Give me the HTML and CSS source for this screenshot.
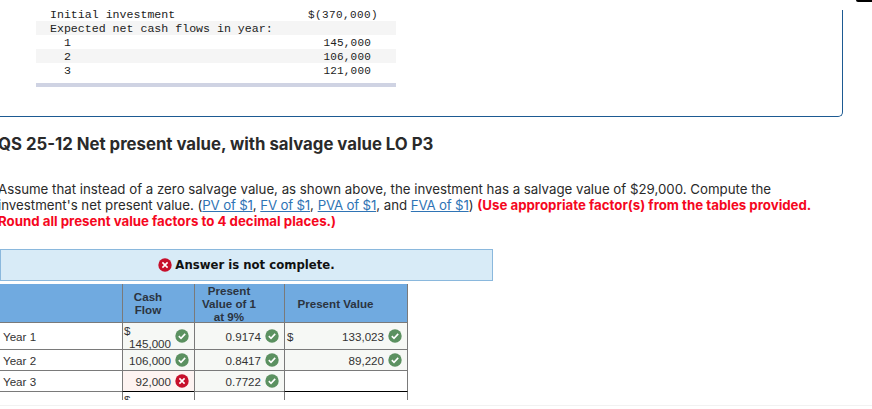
FILE: index.html
```html
<!DOCTYPE html>
<html lang="en">
<head>
<meta charset="utf-8">
<title>QS 25-12</title>
<link rel="stylesheet" href="styles.css">
</head>
<body>
<svg width="0" height="0" class="defs" aria-hidden="true">
  <symbol id="ok" viewBox="0 0 14 14"><circle cx="7" cy="7" r="6.7" fill="#5b9160"/><path d="M3.8 7.2 6 9.3 10.2 4.9" fill="none" stroke="#fff" stroke-width="1.6"/></symbol>
  <symbol id="bad" viewBox="0 0 14 14"><circle cx="7" cy="7" r="6.7" fill="#c70f2b"/><path d="M4.4 4.4 9.6 9.6M9.6 4.4 4.4 9.6" fill="none" stroke="#fff" stroke-width="1.6"/></symbol>
</svg>
<div class="corner"></div>
<section class="panel">
  <div class="data">
    <div class="drow"><span>Initial investment</span><span class="amt first">$(370,000)</span></div>
    <div class="drow band"><span>Expected net cash flows in year:</span></div>
    <div class="drow"><span class="yr">1</span><span class="amt">145,000</span></div>
    <div class="drow band"><span class="yr">2</span><span class="amt">106,000</span></div>
    <div class="drow"><span class="yr">3</span><span class="amt">121,000</span></div>
    <div class="dbar"></div>
  </div>
</section>
<h1 class="title">QS 25-12 Net present value, with salvage value LO P3</h1>
<p class="prompt">Assume that instead of a zero salvage value, as shown above, the investment has a salvage value of $29,000. Compute the<br>investment's net present value. (<a href="#">PV of $1</a>, <a href="#">FV of $1</a>, <a href="#">PVA of $1</a>, and <a href="#">FVA of $1</a>) <strong>(Use appropriate factor(s) from the tables provided.<br>Round all present value factors to 4 decimal places.)</strong></p>
<div class="notice"><svg class="ic"><use href="#bad"/></svg><span>Answer is not complete.</span></div>
<div class="sheet">
  <div class="h"></div>
  <div class="h">Cash<br>Flow</div>
  <div class="h">Present<br>Value of 1<br>at 9%</div>
  <div class="h">Present Value</div>

  <div class="c lbl r1">Year 1</div>
  <div class="c num tint r1"><span class="cur">$</span><span class="low">145,000</span><svg class="ic"><use href="#ok"/></svg></div>
  <div class="c num tint r1">0.9174<svg class="ic"><use href="#ok"/></svg></div>
  <div class="c num tint r1"><span class="cur2">$</span>133,023<svg class="ic"><use href="#ok"/></svg></div>

  <div class="c lbl">Year 2</div>
  <div class="c num tint">106,000<svg class="ic"><use href="#ok"/></svg></div>
  <div class="c num tint">0.8417<svg class="ic"><use href="#ok"/></svg></div>
  <div class="c num tint">89,220<svg class="ic"><use href="#ok"/></svg></div>

  <div class="c lbl">Year 3</div>
  <div class="c num err">92,000<svg class="ic"><use href="#bad"/></svg></div>
  <div class="c num tint">0.7722<svg class="ic"><use href="#ok"/></svg></div>
  <div class="c"></div>

  <div class="c last"></div>
  <div class="c last total"><span class="cur">$</span></div>
  <div class="c last"></div>
  <div class="c last total"></div>
</div>
<div class="foot"></div>
</body>
</html>
```
FILE: styles.css
```css
html, body { margin: 0; padding: 0; }
body { width: 872px; height: 409px; overflow: hidden; background: #fff; position: relative; font-family: "Liberation Sans", Arial, sans-serif; color: #222; }
.defs { position: absolute; }
.corner { position: absolute; top: 0; right: 0; width: 16px; height: 2px; background: #000; border-bottom-left-radius: 2px; }
.panel { width: 843px; height: 117px; box-sizing: border-box; padding-top: 8px; position: relative; }
.panel::after { content: ""; position: absolute; left: 0; right: 0; top: 10px; bottom: 0; box-sizing: border-box; border-right: 1px solid #1d5a92; border-bottom: 1px solid #1d5a92; border-bottom-right-radius: 5px; }
.data { margin-left: 36px; width: 360px; margin-top: -1px; font: 11.6px/14px "Liberation Mono", "Courier New", monospace; color: #222; }
.drow { height: 14px; display: flex; padding-left: 14px; }
.drow span { position: relative; top: 1px; }
.band { background: #f5f5f5; }
.yr { padding-left: 14px; }
.amt { margin-left: auto; padding-right: 25px; font-size: 11px; letter-spacing: .2px; }
.amt.first { padding-right: 18px; letter-spacing: .4px; }
.dbar { height: 4px; margin-top: 6px; background: #cfd3e3; }
.title { margin: 17px 0 0 -2px; font: 700 16.75px/20px Inter, sans-serif; color: #2a2a2a; white-space: nowrap; }
.prompt { margin: 27px 0 0 -2px; font: 13.28px/16px Inter, sans-serif; color: #2a2a2a; white-space: nowrap; }
.prompt a { color: #2f74b5; text-decoration: underline; letter-spacing: -.18px; }
.prompt strong { color: #f5071e; font-weight: 700; }
.notice { margin-top: 20px; width: 493px; height: 32px; box-sizing: border-box; background: #d8ebf7; border: 1px solid #8ab8dd; display: flex; align-items: center; justify-content: center; gap: 3px; font: 700 11.7px "DejaVu Sans", sans-serif; color: #111; }
.ic { width: 14px; height: 14px; flex: none; }
.sheet { margin-top: 3px; display: grid; width: 408px; grid-template-columns: 122px 72px 90px 124px; grid-template-rows: 39px 27px 21px 21px 8px; font-size: 11.6px; line-height: 13px; overflow: hidden; }
.h { background: #70aae0; border-left: 1px solid #7a7a7a; border-bottom: 1px solid #7a7a7a; display: flex; align-items: center; justify-content: center; text-align: center; font-weight: 700; color: #2b3440; box-sizing: border-box; padding-right: 21px; }
.h:nth-child(1) { border-left: 0; }
.h:nth-child(4) { border-right: 1px solid #7a7a7a; }
.c { box-sizing: border-box; border-left: 1px solid #7a7a7a; border-bottom: 1px solid #7a7a7a; display: flex; align-items: center; position: relative; color: #333; }
.c:nth-child(4n+1) { border-left: 0; }
.c:nth-child(4n) { border-right: 1px solid #7a7a7a; }
.lbl { padding-left: 3px; }
.num { justify-content: flex-end; gap: 4px; padding-right: 5px; }
.tint { background: #f6f8f5; }
.err { background: #fdf3f1; }
.cur { position: absolute; left: 1px; top: 1px; }
.cur2 { position: absolute; left: 2px; top: 7px; }
.low { padding-top: 15px; }
.last { border-bottom: 0; }
.total { border-top: 1px solid #000; margin-top: -1px; }
.foot { margin-top: 5px; height: 1px; background: #f2f2f2; }
```
